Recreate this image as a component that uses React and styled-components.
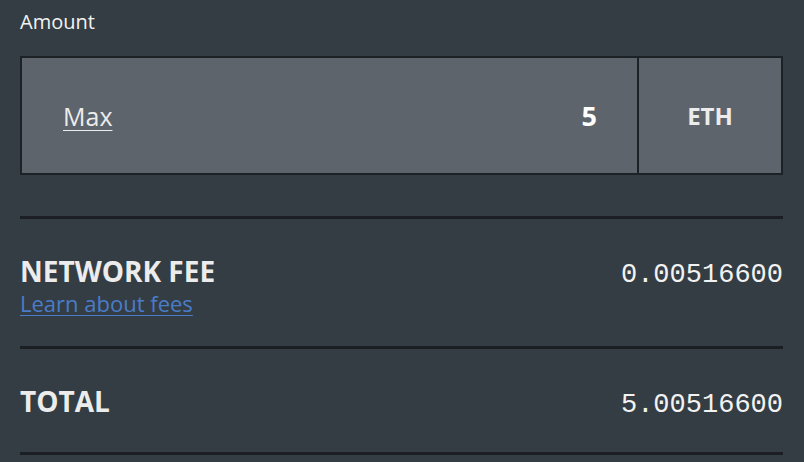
import styled, { createGlobalStyle } from "styled-components";

const GlobalStyle = createGlobalStyle`
  html, body {
    margin: 0;
    padding: 0;
    background-color: #343d44;
  }
  body {
    font-family: "Open Sans", "Liberation Sans", sans-serif;
    color: #f2f2f2;
  }
`;

export default function App() {
  return (
    <Page>
      <GlobalStyle />
      <Label>Amount</Label>

      <AmountBox>
        <AmountField>
          <MaxLink href="#">Max</MaxLink>
          <AmountValue>5</AmountValue>
        </AmountField>
        <Currency>ETH</Currency>
      </AmountBox>

      <Divider $top={41} />

      <SummaryRow $top={37} $bottom={30}>
        <RowTitle>
          <RowLabel>NETWORK FEE</RowLabel>
          <FeeLink href="#">Learn about fees</FeeLink>
        </RowTitle>
        <MonoValue>0.00516600</MonoValue>
      </SummaryRow>

      <Divider />

      <SummaryRow $top={37} $bottom={32}>
        <RowLabel>TOTAL</RowLabel>
        <MonoValue>5.00516600</MonoValue>
      </SummaryRow>

      <Divider />
    </Page>
  );
}

const Page = styled.div`
  width: 763px;
  padding: 8px 21px 0 20px;
  display: flex;
  flex-direction: column;
`;

const Label = styled.div`
  font-size: 20px;
  line-height: 28px;
  margin-bottom: 20px;
`;

const AmountBox = styled.div`
  display: flex;
  height: 115px;
  border: 2px solid #1d2226;
  background-color: #5e646b;
`;

const AmountField = styled.div`
  flex: 1;
  display: flex;
  align-items: center;
  justify-content: space-between;
  padding: 0 40px 0 41px;
  border-right: 2px solid #1d2226;
`;

const MaxLink = styled.a`
  font-size: 25px;
  color: #ececec;
  text-decoration: underline;
  text-underline-offset: 4px;
  text-decoration-thickness: 1px;
`;

const AmountValue = styled.span`
  font-size: 27px;
  font-weight: 700;
  color: #ffffff;
`;

const Currency = styled.div`
  width: 142px;
  display: flex;
  align-items: center;
  justify-content: center;
  font-size: 24px;
  font-weight: 700;
  color: #ececec;
`;

const Divider = styled.div`
  height: 3px;
  background-color: #1b1f23;
  margin-top: ${(p) => p.$top || 0}px;
`;

const SummaryRow = styled.div`
  display: flex;
  align-items: baseline;
  justify-content: space-between;
  padding: ${(p) => p.$top}px 0 ${(p) => p.$bottom}px;
`;

const RowTitle = styled.div`
  display: flex;
  flex-direction: column;
  gap: 4px;
`;

const RowLabel = styled.div`
  font-size: 28px;
  font-weight: 700;
  line-height: 30px;
  color: #ececec;
`;

const FeeLink = styled.a`
  font-size: 22px;
  line-height: 26px;
  color: #4a7cc9;
  text-decoration: underline;
  text-underline-offset: 3px;
  text-decoration-thickness: 1px;
`;

const MonoValue = styled.span`
  font-family: "Liberation Mono", monospace;
  font-size: 27px;
  line-height: 30px;
  color: #f2f2f2;
`;
